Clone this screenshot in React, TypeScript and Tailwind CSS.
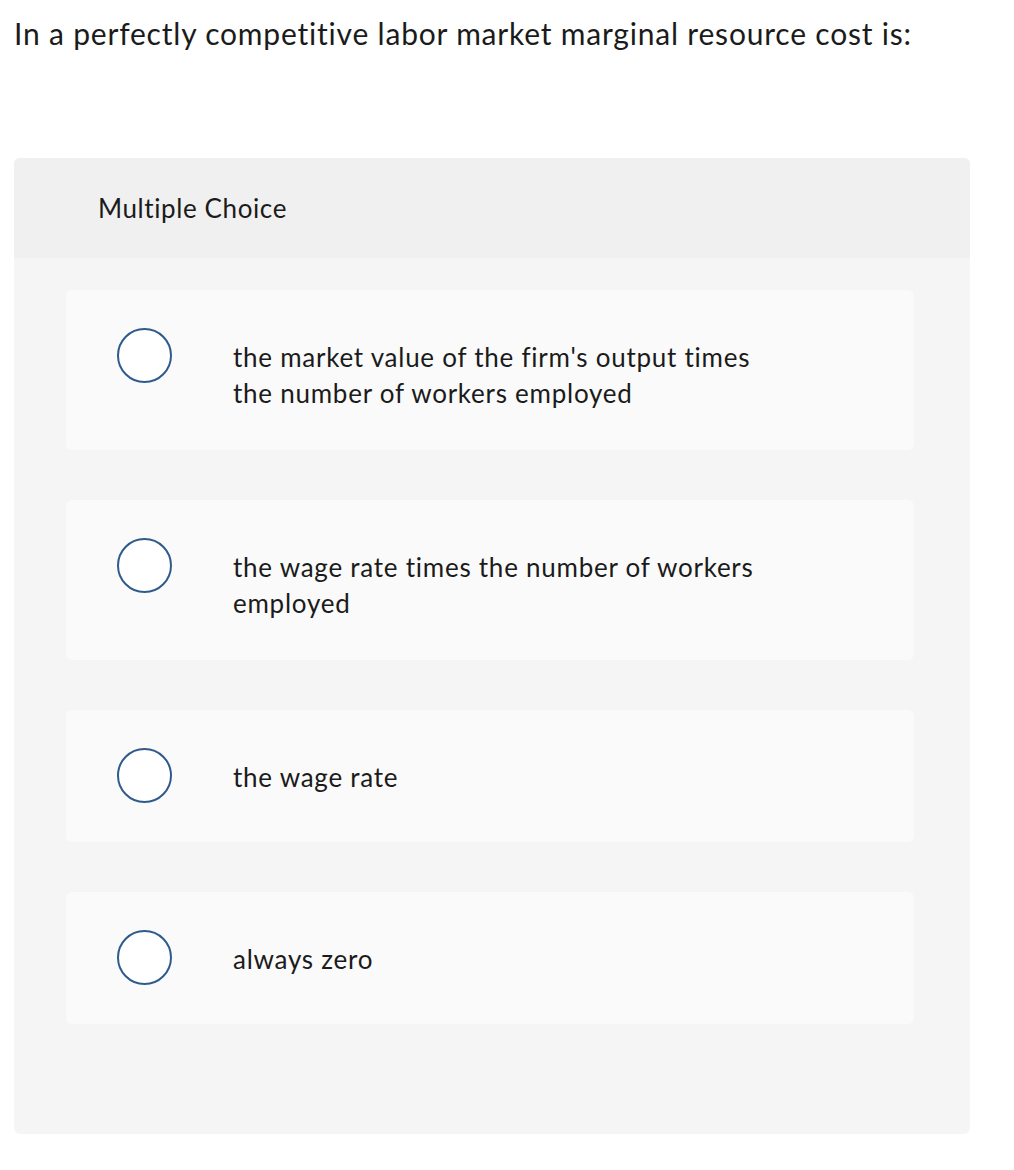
import React from "react";

const options = [
  ["the market value of the firm's output times", "the number of workers employed"],
  ["the wage rate times the number of workers", "employed"],
  ["the wage rate"],
  ["always zero"],
];

export default function App() {
  return (
    <div className="w-[1014px] h-[1170px] bg-white text-[#1b1b1b] font-['Lato',_'Liberation_Sans',_sans-serif] [font-variant-ligatures:none]">
      <h1 className="pl-[14px] pt-[14px] text-[30px] leading-[38px] tracking-[0.8px] font-normal">
        In a perfectly competitive labor market marginal resource cost is:
      </h1>
      <div className="ml-[14px] mt-[106px] w-[956px] h-[976px] rounded-[6px] bg-[#f5f5f5] overflow-hidden">
        <div className="h-[100px] bg-[#f0f0f0] flex items-center pl-[84px] text-[26px] tracking-[0.6px]">
          Multiple Choice
        </div>
        <div className="pl-[52px] pt-[32px] flex flex-col gap-[50px]">
          {options.map((lines, i) => (
            <div
              key={i}
              className="w-[848px] rounded-[6px] bg-[#fafafa] flex items-start pt-[38px] pb-[39px] pl-[51px]"
            >
              <div className="w-[55px] h-[55px] shrink-0 rounded-full border-2 border-[#2f5a8c] bg-white" />
              <div className="ml-[61px] mt-[11px] text-[26px] leading-[36px] tracking-[0.75px]">
                {lines.map((l, j) => (
                  <div key={j}>{l}</div>
                ))}
              </div>
            </div>
          ))}
        </div>
      </div>
    </div>
  );
}
